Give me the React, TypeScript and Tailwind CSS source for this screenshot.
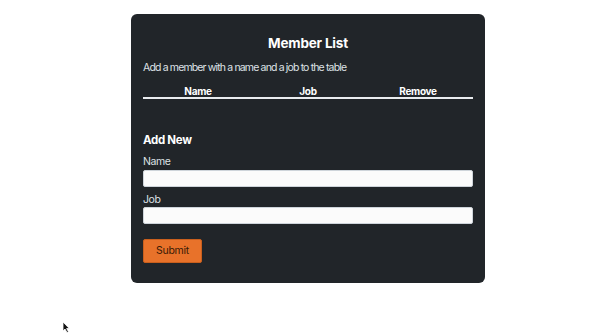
export default function App() {
  return (
    <div className="relative h-[336px] w-[600px] bg-white font-['Inter',sans-serif]">
      <div className="flex justify-center pl-[16px] pt-[14px]">
        <div className="w-[354px] rounded-[6px] bg-[#212529] px-3 pb-5 pt-[19px] text-white">
          <h1 className="text-center text-[13.5px] font-bold leading-[20px] tracking-[-0.2px]">Member List</h1>
          <p className="mt-[8px] text-[10.5px] leading-[14px] tracking-[-0.85px] text-[#dee2e6]">
            Add a member with a name and a job to the table
          </p>
          <table className="mt-[10px] w-full table-fixed">
            <thead>
              <tr className="border-b-2 border-[#e9ecef] text-[10px] font-bold leading-[12px] tracking-[-0.3px]">
                <th>Name</th>
                <th>Job</th>
                <th>Remove</th>
              </tr>
            </thead>
          </table>

          <h2 className="mt-[33px] text-[11.5px] font-bold leading-[16px] tracking-[-0.3px]">Add New</h2>
          <form className="mt-[7px]" onSubmit={(e) => e.preventDefault()}>
            <label className="block text-[10.5px] leading-[14px] tracking-[-0.4px] text-[#dee2e6]">Name</label>
            <input className="mt-[1px] block h-[17px] w-full rounded-[2px] border border-[#ced4da] bg-[#fbfbfb]" />
            <label className="mt-[6px] block text-[10.5px] leading-[14px] tracking-[-0.4px] text-[#dee2e6]">Job</label>
            <input className="block h-[17px] w-full rounded-[2px] border border-[#ced4da] bg-[#fbfbfb]" />
            <button
              type="submit"
              className="mt-[15px] h-[24px] w-[59px] rounded-[2px] border border-[#c95f1d] bg-[#e8722a] text-[10.5px] tracking-[-0.3px] text-[#3a1a06]"
            >
              Submit
            </button>
          </form>
        </div>
      </div>
      <svg className="absolute left-[62px] top-[321px]" width="8" height="12" viewBox="0 0 8 12">
        <path d="M1 1 L1 10 L3 8 L5 11.5 L6.5 10.8 L4.6 7.5 L7.3 7.5 Z" fill="#111" stroke="#fff" strokeWidth="0.8" />
      </svg>
    </div>
  );
}
